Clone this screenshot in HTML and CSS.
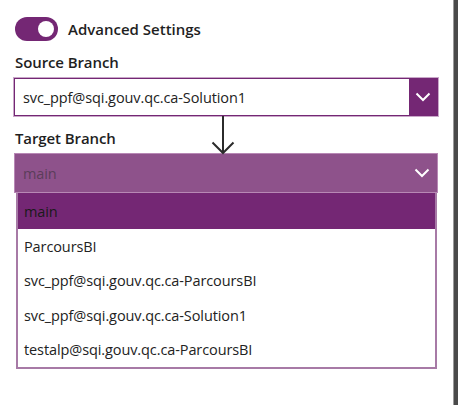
FILE: index.html
```html
<!DOCTYPE html>
<html>
<head>
<meta charset="utf-8">
<link rel="stylesheet" href="styles.css">
</head>
<body>
<div class="page">
  <div class="panel">
    <div class="toggle-row">
      <div class="toggle"><div class="knob"></div></div>
      <span class="toggle-label">Advanced Settings</span>
    </div>
    <div class="label">Source Branch</div>
    <div class="select source">
      <span class="value">svc_ppf@sqi.gouv.qc.ca-Solution1</span>
      <span class="btn">
        <svg width="16" height="10" viewBox="0 0 16 10"><path d="M1.5 1.5 L8 8 L14.5 1.5" fill="none" stroke="#fff" stroke-width="2"/></svg>
      </span>
    </div>
    <div class="connector">
      <svg class="arrow" width="24" height="40" viewBox="0 0 24 40"><path d="M12 0 V37 M1.5 26.5 L12 37 L22.5 26.5" fill="none" stroke="#2b2b2b" stroke-width="2"/></svg>
    </div>
    <div class="label target-label">Target Branch</div>
    <div class="select target">
      <span class="value">main</span>
      <span class="btn">
        <svg width="16" height="10" viewBox="0 0 16 10"><path d="M1.5 1.5 L8 8 L14.5 1.5" fill="none" stroke="#fff" stroke-width="2"/></svg>
      </span>
    </div>
    <ul class="list">
      <li class="selected">main</li>
      <li>ParcoursBI</li>
      <li>svc_ppf@sqi.gouv.qc.ca-ParcoursBI</li>
      <li>svc_ppf@sqi.gouv.qc.ca-Solution1</li>
      <li>testalp@sqi.gouv.qc.ca-ParcoursBI</li>
    </ul>
  </div>
  <div class="scrollbar"></div>
</div>
</body>
</html>
```
FILE: styles.css
```css
html, body {
  margin: 0;
  padding: 0;
  background: #fff;
}
body {
  font-family: "Open Sans", "Noto Sans", sans-serif;
  color: #222;
}
.page {
  display: flex;
  height: 405px;
  width: 458px;
}
.panel {
  flex: 1;
  padding: 17px 0 0 14px;
  width: 424px;
}
.scrollbar {
  width: 5px;
  background: #4a4a4a;
  border-left: 1px solid #9a9a9a;
  box-sizing: border-box;
  margin-left: 15px;
}
.toggle-row {
  display: flex;
  align-items: center;
  height: 24px;
}
.toggle {
  width: 43px;
  height: 24px;
  border-radius: 12px;
  background: #742774;
  margin-left: 1px;
  position: relative;
}
.knob {
  position: absolute;
  width: 16px;
  height: 16px;
  border-radius: 50%;
  background: #fff;
  top: 4px;
  right: 4px;
}
.toggle-label {
  margin-left: 10px;
  font-size: 15px;
  font-weight: 600;
  color: #1f1f1f;
}
.label {
  font-size: 15px;
  font-weight: 600;
  color: #1f1f1f;
  margin: 11px 0 0 1px;
  height: 21px;
  line-height: 21px;
  letter-spacing: -0.1px;
}
.select {
  display: flex;
  width: 424px;
  height: 38px;
  box-sizing: border-box;
  align-items: stretch;
}
.source {
  margin-top: 5px;
  border: 1px solid #742774;
  outline: 1px solid #c9a8c9;
}
.select .value {
  flex: 1;
  display: flex;
  align-items: center;
  padding-left: 8px;
  font-size: 14.5px;
  letter-spacing: -0.1px;
}
.source .btn {
  width: 28px;
  background: #742774;
  display: flex;
  align-items: center;
  justify-content: center;
}
.connector {
  height: 0;
  position: relative;
}
.arrow {
  position: absolute;
  left: 197px;
  top: 0;
}
.target-label {
  margin-top: 12px;
}
.target {
  margin-top: 4px;
  background: #8e528b;
  border: 1px solid #b888b5;
  height: 40px;
}
.target .value {
  color: #5b3d5a;
}
.target .btn {
  width: 30px;
  display: flex;
  align-items: center;
  justify-content: center;
}
.list {
  list-style: none;
  margin: 0 0 0 2px;
  padding: 0;
  width: 421px;
  box-sizing: border-box;
  border: 2px solid #a77aa6;
  border-top: 0;
}
.list li {
  height: 34.5px;
  display: flex;
  align-items: center;
  padding-left: 6px;
  font-size: 14.5px;
  letter-spacing: -0.1px;
  color: #222;
}
.list li.selected {
  background: #742774;
  color: #1a1a1a;
  height: 36px;
}
```
